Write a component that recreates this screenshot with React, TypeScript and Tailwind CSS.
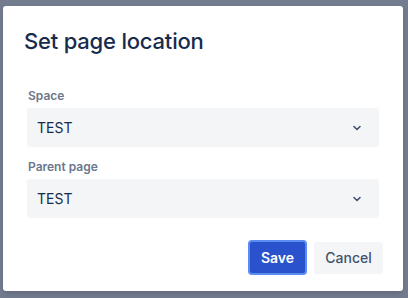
import { ChevronDown } from "lucide-react";

const FIELDS = [
  { label: "Space", value: "TEST" },
  { label: "Parent page", value: "TEST" },
];

function SelectField({ label, value }: { label: string; value: string }) {
  return (
    <div className="flex flex-col">
      <label className="text-[12px] leading-[16px] font-semibold text-[#6b778c] pl-[1px]">{label}</label>
      <div className="mt-[4px] h-[39px] rounded-[3px] bg-[#f4f5f7] flex items-center justify-between pl-[10px] pr-[16px]">
        <span className="text-[14px] text-[#172b4d]">{value}</span>
        <ChevronDown size={12} strokeWidth={3.2} className="text-[#42526e]" />
      </div>
    </div>
  );
}

export default function App() {
  return (
    <div
      className="w-[408px] h-[298px] bg-[#737b8f] overflow-hidden pt-[6px] pl-[3px]"
      style={{ fontFamily: "Inter, 'Noto Sans', sans-serif" }}
    >
      <div className="w-[400px] h-[285px] bg-white rounded-[3px] shadow-md flex flex-col">
        <div className="pt-[23px] pl-[21px]">
          <h1 className="text-[22px] leading-[24px] font-medium text-[#172b4d] tracking-[-0.2px]">
            Set page location
          </h1>
        </div>
        <div className="mt-[35px] px-[24px] flex flex-col gap-[12px]">
          {FIELDS.map((f) => (
            <SelectField key={f.label} label={f.label} value={f.value} />
          ))}
        </div>
        <div className="mt-[22px] pr-[20px] flex justify-end items-center gap-[7px]">
          <button className="h-[35px] w-[59px] rounded-[4px] bg-[#2952cc] border-2 border-[#5a8cf2] text-white text-[14px] font-semibold">
            Save
          </button>
          <button className="h-[32px] w-[69px] rounded-[3px] bg-[#f4f5f7] text-[#42526e] text-[14px] font-medium">
            Cancel
          </button>
        </div>
      </div>
    </div>
  );
}
